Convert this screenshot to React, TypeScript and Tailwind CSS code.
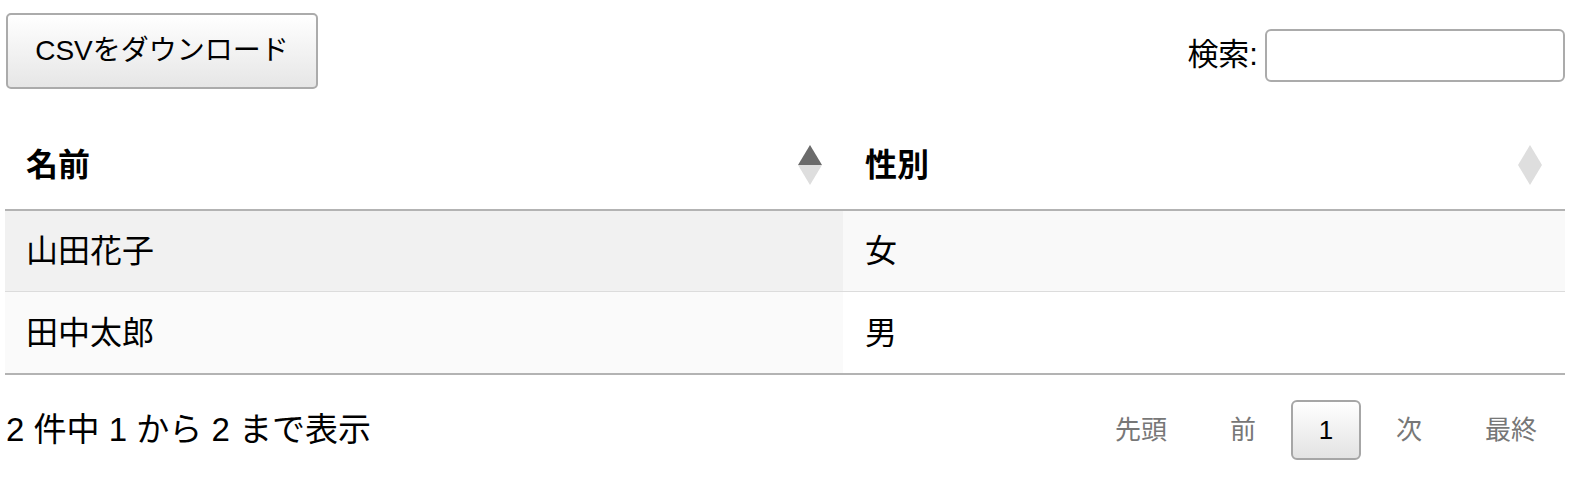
import React from "react";

const font = { fontFamily: '"Liberation Sans", "Noto Sans CJK JP", sans-serif' };

function SortIcon({ active }: { active?: boolean }) {
  return (
    <svg width="24" height="40" viewBox="0 0 24 40" className="shrink-0">
      <polygon points="12,0 24,20 0,20" fill={active ? "#6b6b6b" : "#dedede"} />
      <polygon points="0,20 24,20 12,40" fill="#dedede" />
    </svg>
  );
}

const rows = [
  { name: "山田花子", sex: "女" },
  { name: "田中太郎", sex: "男" },
];

function PageButton({ label, current }: { label: string; current?: boolean }) {
  if (current) {
    return (
      <div className="flex h-[60px] w-[70px] items-center justify-center rounded-[6px] border-2 border-[#a6a6a6] bg-gradient-to-b from-white to-[#e3e3e3] text-[26px] text-black">
        {label}
      </div>
    );
  }
  return <div className="flex h-[60px] items-center px-[28px] text-[26px] text-[#777]">{label}</div>;
}

export default function App() {
  return (
    <div className="min-h-[499px] bg-white pl-[5px] pr-[14px] text-black" style={font}>
      <div className="flex items-start justify-between pt-[13px]">
        <button className="ml-px flex h-[76px] w-[312px] items-center justify-center rounded-[5px] border-2 border-[#ababab] bg-gradient-to-b from-white to-[#e6e6e6] text-[28px]">
          CSVをダウンロード
        </button>
        <div className="mt-[16px] flex items-center">
          <span className="mr-[7px] text-[31px]">検索:</span>
          <input className="h-[53px] w-[300px] rounded-[6px] border-2 border-[#ababab] bg-white px-2 text-[28px] outline-none" />
        </div>
      </div>

      <div className="mt-[32px]">
        <div className="flex h-[90px] border-b-2 border-[#b3b3b3]">
          <div className="flex w-[838px] items-center justify-between pl-[21px] pr-[21px]">
            <span className="text-[32px] font-bold">名前</span>
            <SortIcon active />
          </div>
          <div className="flex flex-1 items-center justify-between pl-[22px] pr-[23px]">
            <span className="text-[32px] font-bold">性別</span>
            <SortIcon />
          </div>
        </div>
        {rows.map((r, i) => (
          <div
            key={r.name}
            className={`flex text-[32px] ${i === 0 ? "h-[81px] border-b border-[#dcdcdc]" : "h-[83px] border-b-2 border-[#b3b3b3]"}`}
          >
            <div className={`flex w-[838px] items-center pl-[21px] ${i === 0 ? "bg-[#f1f1f1]" : "bg-[#fafafa]"}`}>
              {r.name}
            </div>
            <div className={`flex flex-1 items-center pl-[22px] ${i === 0 ? "bg-[#f9f9f9]" : "bg-white"}`}>
              {r.sex}
            </div>
          </div>
        ))}
      </div>

      <div className="mt-[25px] flex items-center justify-between">
        <div className="pl-px text-[33px]">2 件中 1 から 2 まで表示</div>
        <div className="flex items-center gap-[7px]">
          <PageButton label="先頭" />
          <PageButton label="前" />
          <PageButton label="1" current />
          <PageButton label="次" />
          <PageButton label="最終" />
        </div>
      </div>
    </div>
  );
}
